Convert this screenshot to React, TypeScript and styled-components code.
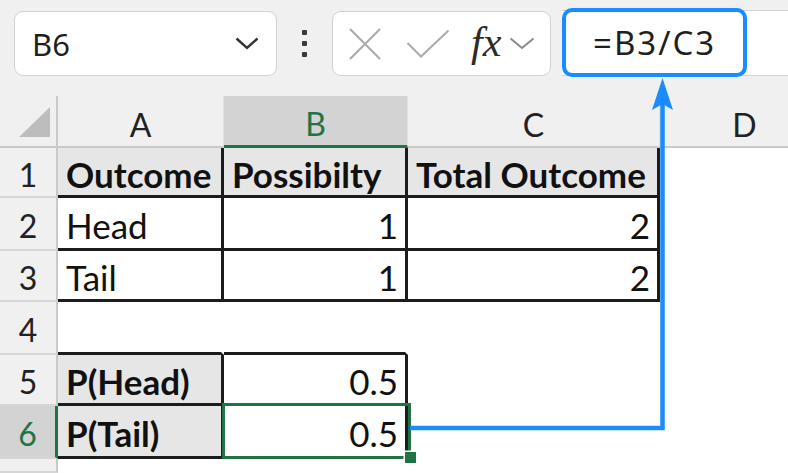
import React from 'react';
import styled, { createGlobalStyle } from 'styled-components';

const GlobalStyle = createGlobalStyle`
  html, body { margin: 0; padding: 0; }
  body { background: #f0f0f0; font-family: Lato, "Liberation Sans", sans-serif; }
`;

const GREEN = '#217346';
const BLUE = '#1a8cff';

const Page = styled.div`
  position: relative;
  width: 788px;
  height: 473px;
  overflow: hidden;
  background: #f0f0f0;
  display: flex;
  flex-direction: column;
`;

const Toolbar = styled.div`
  height: 96px;
  flex: none;
  display: flex;
  align-items: flex-start;
  box-sizing: border-box;
  padding-top: 11px;
`;

const NameBox = styled.div`
  margin-left: 14px;
  width: 263px;
  height: 65px;
  flex: none;
  box-sizing: border-box;
  border: 1.5px solid #d2d2d2;
  border-radius: 9px;
  background: #fff;
  display: flex;
  align-items: center;
  justify-content: space-between;
  padding: 0 17px 0 17px;
  font-family: "Noto Sans", sans-serif;
  font-size: 31px;
  color: #1f1f1f;
`;

const Dots = styled.div`
  width: 55px;
  height: 65px;
  flex: none;
  display: flex;
  flex-direction: column;
  align-items: center;
  justify-content: center;
  gap: 6px;
  span {
    width: 5px;
    height: 5px;
    border-radius: 1px;
    background: #3a3a3a;
  }
`;

const FxBox = styled.div`
  width: 219px;
  height: 65px;
  flex: none;
  box-sizing: border-box;
  border: 1.5px solid #d2d2d2;
  border-radius: 9px;
  background: #fff;
  display: flex;
  align-items: center;
  padding-left: 15px;
`;

const FxLabel = styled.span`
  font-family: "Liberation Serif", "DejaVu Serif", serif;
  font-style: italic;
  font-size: 42px;
  color: #2b2b2b;
  margin-left: 21px;
  line-height: 1;
  margin-top: -4px;
`;

const FormulaInput = styled.div`
  margin-left: 11px;
  margin-top: -1px;
  flex: 1;
  height: 66px;
  box-sizing: border-box;
  border-top: 1.5px solid #d2d2d2;
  border-bottom: 1.5px solid #d2d2d2;
  background: #fff;
  display: flex;
  align-items: stretch;
`;

const FormulaHighlight = styled.div`
  width: 185px;
  margin-top: -3px;
  margin-bottom: -1.5px;
  box-sizing: border-box;
  border: 4px solid ${BLUE};
  border-radius: 10px;
  display: flex;
  align-items: center;
  padding-left: 27px;
  font-family: "Noto Sans", sans-serif;
  font-size: 33px;
  letter-spacing: 2px;
  color: #1f1f1f;
`;

const Sheet = styled.div`
  flex: 1;
  display: grid;
  grid-template-columns: 58px 166px 184px 252px 170px;
  grid-template-rows: 52px 50px 53px 51px 53px 51px 53px 1fr;
  background: #fff;
`;

type Edge = 'black' | 'none';

const Corner = styled.div`
  background: #f0f0f0;
  box-sizing: border-box;
  border-right: 2px solid #c9c9c9;
  border-bottom: 2px solid #c9c9c9;
  position: relative;
  &::after {
    content: '';
    position: absolute;
    left: 19px;
    top: 11px;
    width: 31px;
    height: 30px;
    background: #bdbdbd;
    clip-path: polygon(100% 0, 100% 100%, 0 100%);
  }
`;

const ColHeader = styled.div<{ $sel?: boolean }>`
  background: ${(p) => (p.$sel ? '#d3d3d3' : '#f0f0f0')};
  color: ${(p) => (p.$sel ? GREEN : '#222')};
  box-sizing: border-box;
  border-bottom: ${(p) => (p.$sel ? `3px solid ${GREEN}` : '2px solid #c9c9c9')};
  border-right: 1px solid #e2e2e2;
  display: flex;
  align-items: center;
  justify-content: center;
  font-size: 32px;
  padding-top: 6px;
`;

const RowHeader = styled.div<{ $sel?: boolean }>`
  background: ${(p) => (p.$sel ? '#d3d3d3' : '#f0f0f0')};
  color: ${(p) => (p.$sel ? GREEN : '#222')};
  box-sizing: border-box;
  border-right: ${(p) => (p.$sel ? `3px solid ${GREEN}` : '2px solid #c9c9c9')};
  border-bottom: 2px solid #d6d6d6;
  display: flex;
  align-items: center;
  justify-content: center;
  font-size: 32px;
  padding-top: 4px;
`;

const Cell = styled.div<{
  $fill?: boolean;
  $bold?: boolean;
  $num?: boolean;
  $right: Edge;
  $bottom: Edge;
}>`
  position: relative;
  box-sizing: border-box;
  background: ${(p) => (p.$fill ? '#e7e6e6' : '#fff')};
  border-right: 3px solid ${(p) => (p.$right === 'black' ? '#1c1c1c' : 'transparent')};
  border-bottom: 3px solid ${(p) => (p.$bottom === 'black' ? '#1c1c1c' : 'transparent')};
  display: flex;
  align-items: center;
  justify-content: ${(p) => (p.$num ? 'flex-end' : 'flex-start')};
  padding: 4px 7px 0 8px;
  font-size: 35px;
  font-weight: ${(p) => (p.$bold ? 700 : 400)};
  color: #111;
  white-space: nowrap;
`;

const Selection = styled.div`
  position: absolute;
  z-index: 2;
  left: -2px;
  top: -3px;
  right: -6px;
  bottom: -3px;
  border: 3px solid ${GREEN};
  pointer-events: none;
`;

const FillHandle = styled.div`
  position: absolute;
  right: -8px;
  bottom: -7px;
  width: 11px;
  height: 11px;
  background: ${GREEN};
  box-shadow: 0 0 0 1.5px #fff;
`;

const Overlay = styled.svg`
  position: absolute;
  z-index: 3;
  left: 0;
  top: 0;
  pointer-events: none;
`;

type CellDef = {
  text?: string;
  fill?: boolean;
  bold?: boolean;
  num?: boolean;
  right?: Edge;
  bottom?: Edge;
  selected?: boolean;
};

const B: Edge = 'black';

const rows: CellDef[][] = [
  [
    { text: 'Outcome', fill: true, bold: true, right: B, bottom: B },
    { text: 'Possibilty', fill: true, bold: true, right: B, bottom: B },
    { text: 'Total Outcome', fill: true, bold: true, right: B, bottom: B },
    {},
  ],
  [
    { text: 'Head', right: B, bottom: B },
    { text: '1', num: true, right: B, bottom: B },
    { text: '2', num: true, right: B, bottom: B },
    {},
  ],
  [
    { text: 'Tail', right: B, bottom: B },
    { text: '1', num: true, right: B, bottom: B },
    { text: '2', num: true, right: B, bottom: B },
    {},
  ],
  [{ bottom: B }, { bottom: B }, {}, {}],
  [
    { text: 'P(Head)', fill: true, bold: true, right: B, bottom: B },
    { text: '0.5', num: true, right: B, bottom: B },
    {},
    {},
  ],
  [
    { text: 'P(Tail)', fill: true, bold: true, right: B, bottom: B },
    { text: '0.5', num: true, right: B, bottom: B, selected: true },
    {},
    {},
  ],
  [{}, {}, {}, {}],
];

const cols = ['A', 'B', 'C', 'D'];

export default function App() {
  return (
    <Page>
      <GlobalStyle />
      <Toolbar>
        <NameBox>
          <span>B6</span>
          <svg width="24" height="13" viewBox="0 0 24 13">
            <path d="M1.5 1.5 L12 11 L22.5 1.5" fill="none" stroke="#333" strokeWidth="2.4" />
          </svg>
        </NameBox>
        <Dots>
          <span />
          <span />
          <span />
        </Dots>
        <FxBox>
          <svg width="34" height="34" viewBox="0 0 34 34">
            <path d="M2 2 L32 32 M32 2 L2 32" stroke="#ababab" strokeWidth="2" fill="none" />
          </svg>
          <svg width="44" height="30" viewBox="0 0 44 30" style={{ marginLeft: 24 }}>
            <path d="M1.5 14 L15 27.5 L42.5 1.5" stroke="#ababab" strokeWidth="2" fill="none" />
          </svg>
          <FxLabel>fx</FxLabel>
          <svg width="26" height="13" viewBox="0 0 26 13" style={{ marginLeft: 8 }}>
            <path d="M1.5 1.5 L13 11 L24.5 1.5" stroke="#8a8a8a" strokeWidth="2" fill="none" />
          </svg>
        </FxBox>
        <FormulaInput>
          <FormulaHighlight>=B3/C3</FormulaHighlight>
        </FormulaInput>
      </Toolbar>
      <Sheet>
        <Corner />
        {cols.map((c) => (
          <ColHeader key={c} $sel={c === 'B'}>
            {c}
          </ColHeader>
        ))}
        {rows.map((r, i) => (
          <React.Fragment key={i}>
            <RowHeader $sel={i === 5}>{i < 6 ? i + 1 : ''}</RowHeader>
            {r.map((c, j) => (
              <Cell
                key={j}
                $fill={c.fill}
                $bold={c.bold}
                $num={c.num}
                $right={c.right ?? 'none'}
                $bottom={c.bottom ?? 'none'}
              >
                {c.text}
                {c.selected && (
                  <Selection>
                    <FillHandle />
                  </Selection>
                )}
              </Cell>
            ))}
          </React.Fragment>
        ))}
      </Sheet>
      <Overlay width="788" height="473" viewBox="0 0 788 473">
        <path d="M410 428 H662.5 V100" fill="none" stroke={BLUE} strokeWidth="4.5" />
        <path d="M662.5 78 L673 110 L662.5 104 L652 110 Z" fill={BLUE} />
      </Overlay>
    </Page>
  );
}
